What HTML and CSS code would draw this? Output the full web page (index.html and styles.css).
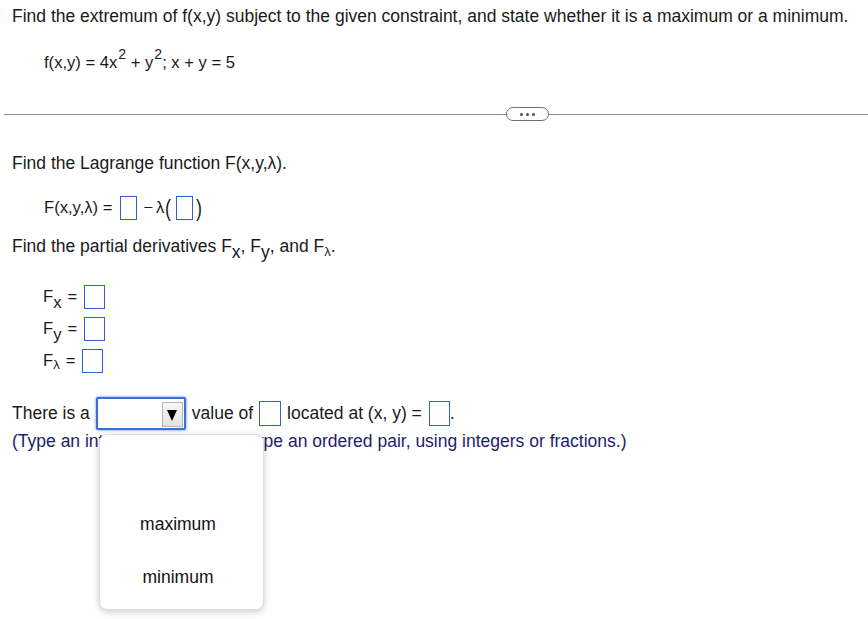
FILE: index.html
```html
<!DOCTYPE html>
<html>
<head>
<meta charset="utf-8">
<link rel="stylesheet" href="styles.css">
</head>
<body>
<div class="page">
  <p class="title">Find the extremum of f(x,y) subject to the given constraint, and state whether it is a maximum or a minimum.</p>
  <p class="formula">f(x,y) = 4x<sup>2</sup> + y<sup>2</sup>; x + y = 5</p>

  <div class="sep">
    <span class="line short"></span>
    <span class="pill"><i></i><i></i><i></i></span>
    <span class="line"></span>
  </div>

  <p class="q q1">Find the Lagrange function F(x,y,λ).</p>
  <p class="eq eq1"><span>F(x,y,λ) =</span><span class="box b1"></span><span>−</span><span class="lam1">λ</span><span class="paren">(</span><span class="box b1 in"></span><span class="paren">)</span></p>

  <p class="q q2">Find the partial derivatives F<sub>x</sub>, F<sub>y</sub>, and F<sub class="lam">λ</sub>.</p>

  <div class="partials">
    <div class="prow"><span class="lab">F<sub>x</sub></span><span>=</span><span class="box b2"></span></div>
    <div class="prow"><span class="lab">F<sub>y</sub></span><span>=</span><span class="box b2"></span></div>
    <div class="prow"><span class="lab">F<sub class="lam">λ</sub></span><span>=</span><span class="box b2"></span></div>
  </div>

  <div class="answer">
    <span>There is a</span>
    <span class="select"><span class="arrow"></span></span>
    <span>value of</span>
    <span class="box b3"></span>
    <span>located at (x, y) =</span>
    <span class="box b3 tight"></span><span>.</span>
  </div>
  <p class="hint">(Type an integer or a fraction. Type an ordered pair, using integers or fractions.)</p>

  <div class="menu">
    <div class="opt">maximum</div>
    <div class="opt">minimum</div>
  </div>
</div>
</body>
</html>
```

FILE: styles.css
```css
html, body {
  margin: 0;
  padding: 0;
  background: #fff;
}
body {
  font-family: "Liberation Sans", Arial, sans-serif;
  font-size: 17.5px;
  color: #1a1a1a;
}
.page {
  position: relative;
  width: 868px;
  height: 619px;
  overflow: hidden;
}
p { margin: 0; }
.title {
  padding: 6px 0 0 12px;
  line-height: 20px;
  white-space: nowrap;
}
.formula {
  margin-top: 27px;
  padding-left: 44px;
  font-size: 16.6px;
  line-height: 20px;
}
.formula sup {
  font-size: 14px;
  vertical-align: 9px;
  line-height: 0;
  margin-left: 1px;
}
.sep {
  display: flex;
  align-items: center;
  margin: 34px 0 0 4px;
  height: 14px;
}
.line {
  flex: 1;
  height: 1px;
  background: #858a95;
}
.line.short { flex: 0 0 502px; }
.pill {
  flex: 0 0 auto;
  width: 41px;
  height: 12px;
  border: 1px solid #6b7380;
  border-radius: 7px;
  display: flex;
  align-items: center;
  justify-content: center;
  gap: 3px;
  background: #fff;
}
.pill i {
  width: 3px;
  height: 3px;
  border-radius: 50%;
  background: #4a4f57;
}
.q {
  padding-left: 12px;
  line-height: 20px;
}
.q1 { margin-top: 32px; }
.eq {
  padding-left: 44px;
  display: flex;
  align-items: center;
  font-size: 16.6px;
}
.eq1 { margin-top: 22px; height: 26px; }
.box {
  display: inline-block;
  border: 1px solid #2d62d0;
  background: #fff;
  box-sizing: border-box;
}
.b1 { width: 17px; height: 24px; margin: 0 6px 0 8px; }
.b1.in { margin: 0 2px 0 4px; }
.lam1 { margin-left: 3px; }
.eq1 .paren {
  font-size: 24px;
  line-height: 24px;
  font-weight: 300;
  transform: scaleX(0.75);
}
.eq1 .paren:first-of-type { margin-left: 9px; }
.q2 { margin-top: 15px; }
.q2 sub {
  font-size: 17.5px;
  vertical-align: -6px;
  line-height: 0;
}
.q2 sub.lam { font-size: 13px; vertical-align: -4px; }
.partials {
  margin-top: 29px;
  padding-left: 43px;
  display: flex;
  flex-direction: column;
  gap: 8px;
}
.prow {
  display: flex;
  align-items: center;
  height: 24px;
  font-size: 16.6px;
  gap: 6px;
}
.lab sub {
  font-size: 16.6px;
  vertical-align: -6px;
  line-height: 0;
}
.lab sub.lam { font-size: 13px; vertical-align: -3px; }
.b2 { width: 21px; height: 24px; margin-left: 1px; }
.answer {
  margin-top: 23px;
  padding-left: 12px;
  display: flex;
  align-items: center;
  height: 34px;
  gap: 5px;
}
.select {
  width: 90px;
  height: 33px;
  box-sizing: border-box;
  border: 2px solid #3a6fd8;
  box-shadow: 0 0 3px #5a8ae6;
  border-radius: 2px;
  position: relative;
  background: #fff;
  margin: 0 1px 0 1px;
}
.arrow {
  position: absolute;
  right: 1px;
  top: 3px;
  width: 21px;
  height: 25px;
  box-sizing: border-box;
  border: 1px solid #b5b5b5;
  background: linear-gradient(#f8f8f8, #e2e2e2);
}
.arrow::after {
  content: "";
  position: absolute;
  left: 4px;
  top: 7px;
  border-left: 5.5px solid transparent;
  border-right: 5.5px solid transparent;
  border-top: 11px solid #000;
}
.b3 { width: 22px; height: 25px; margin: 0 1px; }
.b3.tight { margin: 0 -5px 0 2px; width: 21px; }
.hint {
  padding: 1px 0 0 12px;
  color: #1d1d6b;
  line-height: 20px;
  white-space: nowrap;
}
.menu {
  position: absolute;
  left: 99px;
  top: 434px;
  width: 165px;
  height: 176px;
  background: #fff;
  border: 1px solid #dcdcdc;
  box-sizing: border-box;
  border-radius: 8px;
  box-shadow: 0 2px 7px rgba(0,0,0,0.2);
}
.opt {
  position: absolute;
  left: 0;
  right: 0;
  text-align: center;
  line-height: 20px;
  color: #111;
  padding-right: 7px;
}
.opt:nth-child(1) { top: 79px; }
.opt:nth-child(2) { top: 132px; }
```
